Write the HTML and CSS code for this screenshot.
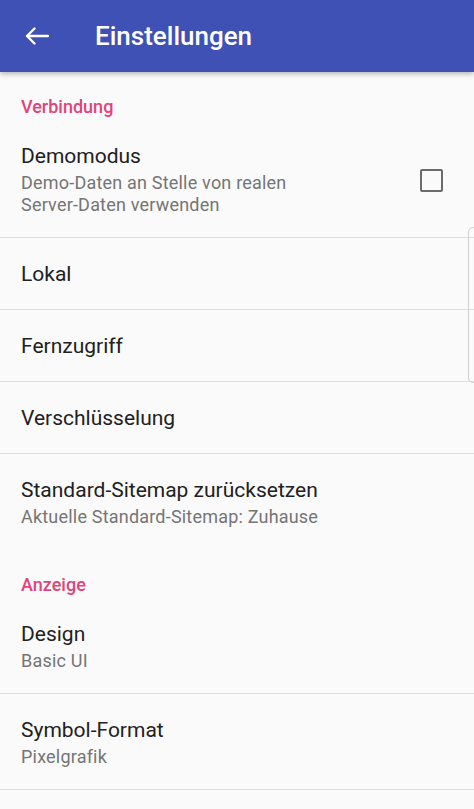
FILE: index.html
```html
<!DOCTYPE html>
<html lang="de">
<head>
    <meta charset="UTF-8">
    <meta name="viewport" content="width=device-width, initial-scale=1.0">
    <title>Einstellungen</title>
    <link rel="stylesheet" href="styles.css">
</head>
<body>

    <header class="appbar">
        <button class="back" aria-label="Zurück">
            <svg width="24" height="18" viewBox="0 0 24 18">
                <path d="M2 9H23M2 9L9.5 1.5M2 9L9.5 16.5" fill="none" stroke="#fff" stroke-width="2.4" stroke-linecap="round" stroke-linejoin="round"/>
            </svg>
        </button>
        <h1>Einstellungen</h1>
    </header>

    <main class="prefs">
        <div class="category">Verbindung</div>

        <div class="pref">
            <div class="text">
                <div class="title">Demomodus</div>
                <div class="summary">Demo-Daten an Stelle von realen<br>Server-Daten verwenden</div>
            </div>
            <span class="checkbox"></span>
        </div>
        <div class="pref single"><div class="title">Lokal</div></div>
        <div class="pref single"><div class="title">Fernzugriff</div></div>
        <div class="pref single"><div class="title">Verschlüsselung</div></div>
        <div class="pref last">
            <div class="text">
                <div class="title">Standard-Sitemap zurücksetzen</div>
                <div class="summary">Aktuelle Standard-Sitemap: Zuhause</div>
            </div>
        </div>

        <div class="category">Anzeige</div>

        <div class="pref">
            <div class="text">
                <div class="title">Design</div>
                <div class="summary">Basic UI</div>
            </div>
        </div>
        <div class="pref">
            <div class="text">
                <div class="title">Symbol-Format</div>
                <div class="summary">Pixelgrafik</div>
            </div>
        </div>
    </main>

    <div class="scroll-thumb"></div>

</body>
</html>
```

FILE: styles.css
```css
body {
    font-family: Roboto, "Noto Sans", sans-serif;
    margin: 0;
    background-color: #fafafa;
    height: 809px;
    overflow: hidden;
    position: relative;
}
.appbar {
    height: 72px;
    background: #3f51b5;
    display: flex;
    align-items: center;
    box-shadow: 0 2px 5px rgba(0, 0, 0, 0.28);
    position: relative;
    z-index: 1;
}
.back {
    background: none;
    border: 0;
    padding: 0;
    margin: 0 0 0 25px;
    width: 24px;
    height: 18px;
    display: flex;
}
.appbar h1 {
    margin: 0 0 0 46px;
    color: #fff;
    font-size: 26px;
    font-weight: 500;
    line-height: 30px;
}
.category {
    color: #e2437b;
    font-size: 18px;
    font-weight: 500;
    line-height: 22px;
    padding: 24px 21px 2px;
}
.pref {
    display: flex;
    align-items: center;
    padding: 24px 31px 21px 21px;
    border-bottom: 1px solid #dedede;
}
.pref.single {
    padding-top: 0;
    padding-bottom: 0;
    height: 71px;
}
.pref.last {
    border-bottom: 0;
    padding-bottom: 22px;
}
.text {
    flex: 1;
}
.title {
    color: #212121;
    font-size: 21px;
    line-height: 24px;
}
.summary {
    color: #757575;
    font-size: 18px;
    letter-spacing: 0.2px;
    line-height: 22px;
    margin-top: 4px;
}
.checkbox {
    width: 19px;
    height: 19px;
    border: 2px solid #6b6b6b;
    border-radius: 2px;
}
.scroll-thumb {
    position: absolute;
    right: -4px;
    top: 227px;
    width: 8px;
    height: 154px;
    border: 1.5px solid #cfcfcf;
    border-radius: 6px;
}
```
